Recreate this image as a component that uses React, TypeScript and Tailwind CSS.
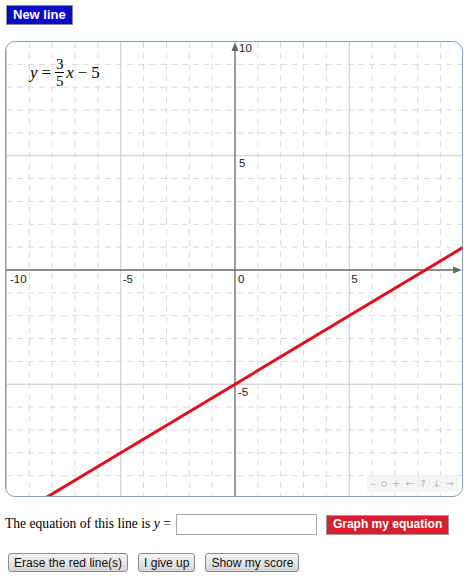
import React from "react";

const U = 22.85;
const OX = 229;
const OY = 228;
const px = (x: number) => OX + x * U;
const py = (y: number) => OY - y * U;

function Board() {
  const W = 456;
  const H = 454;
  const lines: React.ReactNode[] = [];
  for (let i = -10; i <= 10; i++) {
    if (i === 0) continue;
    const major = i % 5 === 0;
    const x = px(i);
    if (x > 0 && x < W) {
      lines.push(
        <line
          key={"v" + i}
          x1={x}
          y1={0}
          x2={x}
          y2={H}
          stroke={major ? "#c8c8c8" : "#d9d9d9"}
          strokeWidth={1}
          strokeDasharray={major ? undefined : "6 5"}
        />
      );
    }
    const y = py(i);
    if (y > 0 && y < H) {
      lines.push(
        <line
          key={"h" + i}
          x1={0}
          y1={y}
          x2={W}
          y2={y}
          stroke={major ? "#c8c8c8" : "#d9d9d9"}
          strokeWidth={1}
          strokeDasharray={major ? undefined : "6 5"}
        />
      );
    }
  }
  const f = (x: number) => 0.6 * x - 5;
  const xa = -11;
  const xb = 11;
  return (
    <div className="relative ml-[5px] h-[456px] w-[458px] overflow-hidden rounded-[10px] border border-[#8a9cb3] bg-white">
      <svg width={W} height={H} className="block">
        {lines}
        <line x1={0} y1={OY} x2={W - 6} y2={OY} stroke="#666" strokeWidth={1.3} />
        <polygon points={`${W},${OY} ${W - 9},${OY - 3.5} ${W - 9},${OY + 3.5}`} fill="#666" />
        <line x1={OX} y1={H} x2={OX} y2={6} stroke="#666" strokeWidth={1.3} />
        <polygon points={`${OX},0 ${OX - 3.5},9 ${OX + 3.5},9`} fill="#666" />
        <g fontFamily="'Liberation Sans', Arial, sans-serif" fontSize={11.5} fill="#222">
          <text x={px(-10) + 3.5} y={OY + 13}>-10</text>
          <text x={px(-5) + 2} y={OY + 13}>-5</text>
          <text x={px(0) + 3} y={OY + 13}>0</text>
          <text x={px(5) + 2} y={OY + 13}>5</text>
          <text x={OX + 4} y={py(10) + 10}>10</text>
          <text x={OX + 4} y={py(5) + 11}>5</text>
          <text x={OX + 3} y={py(-5) + 12}>-5</text>
        </g>
        <line x1={px(xa)} y1={py(f(xa))} x2={px(xb)} y2={py(f(xb))} stroke="#e0101e" strokeWidth={3} />
      </svg>
      <div
        className="absolute left-[24px] top-[15px] flex items-center text-[17px] leading-none text-black"
        style={{ fontFamily: "'Liberation Serif', 'DejaVu Serif', serif" }}
      >
        <span className="italic">y</span>
        <span className="mx-[4px]">=</span>
        <span className="inline-flex flex-col items-center text-[15px] leading-[14px]">
          <span>3</span>
          <span className="my-[1px] h-px w-[9px] bg-black" />
          <span>5</span>
        </span>
        <span className="ml-[2px] italic">x</span>
        <span className="mx-[4px]">−</span>
        <span>5</span>
      </div>
      <div
        className="absolute bottom-[4px] right-[4px] flex gap-[5px] bg-[#f3f3f3]/80 px-[4px] py-[1px] text-[10px] text-[#bbbbbb]"
        style={{ fontFamily: "'DejaVu Sans', sans-serif" }}
      >
        <span>–</span>
        <span>o</span>
        <span>+</span>
        <span>←</span>
        <span>↑</span>
        <span>↓</span>
        <span>→</span>
      </div>
    </div>
  );
}

const grayBtn =
  "h-[19px] whitespace-nowrap rounded-[3px] border border-[#8a8a8a] bg-gradient-to-b from-[#f4f4f4] to-[#d6d6d6] px-[5px] text-[12px] leading-[16px] text-[#111]";

export default function App() {
  return (
    <div
      className="flex h-[581px] w-[474px] flex-col bg-white"
      style={{ fontFamily: "'Liberation Sans', Arial, sans-serif" }}
    >
      <div className="flex pl-[6px] pt-[5px]">
        <button className="h-[20px] border border-[#8c8c8c] bg-[#0a0acb] px-[6px] text-[13px] font-bold leading-[18px] text-white">
          New line
        </button>
      </div>
      <div className="mt-[16px] flex">
        <Board />
      </div>
      <div className="mt-[17px] flex items-center whitespace-nowrap pl-[5px]">
        <span
          className="text-[13.6px] text-black"
          style={{ fontFamily: "'Liberation Serif', 'DejaVu Serif', serif" }}
        >
          The equation of this line is <span className="italic">y</span> =
        </span>
        <input className="ml-[5px] h-[21px] w-[141px] shrink-0 border border-[#a9a9a9] bg-white" />
        <button className="ml-[9px] h-[20px] shrink-0 border border-[#999] bg-[#d0222f] px-[6px] text-[12px] font-bold leading-[17px] text-white">
          Graph my equation
        </button>
      </div>
      <div className="mt-[18px] flex gap-[10px] pl-[8px]">
        <button className={grayBtn}>Erase the red line(s)</button>
        <button className={grayBtn}>I give up</button>
        <button className={grayBtn}>Show my score</button>
      </div>
    </div>
  );
}
